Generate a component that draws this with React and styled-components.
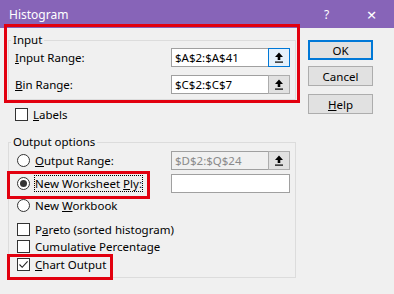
import React from 'react'
import styled, { createGlobalStyle } from 'styled-components'

const Global = createGlobalStyle`
  html, body { margin: 0; padding: 0; overflow: hidden; }
  body { font-family: "Noto Sans", "Open Sans", sans-serif; font-size: 11.5px; color: #000; }
`

const Window = styled.div`
  width: 394px;
  height: 294px;
  background: #f0f0f0;
  display: flex;
  flex-direction: column;
`

const TitleBar = styled.div`
  height: 28px;
  background: #8764b8;
  color: #fff;
  display: flex;
  align-items: center;
  padding: 0 0 0 9px;
  font-size: 12px;
`

const Title = styled.div`
  flex: 1;
`

const TitleBtn = styled.div`
  width: 45px;
  text-align: center;
  font-size: ${p => p.$big ? '17px' : '12px'};
`

const Body = styled.div`
  flex: 1;
  display: flex;
  padding: 0 0 0 8px;
`

const Left = styled.div`
  width: 288px;
  display: flex;
  flex-direction: column;
`

const Right = styled.div`
  display: flex;
  flex-direction: column;
  gap: 6px;
  margin: 12px 0 0 12px;
`

const Mark = styled.div`
  position: relative;
  &::after {
    content: '';
    position: absolute;
    inset: ${p => p.$inset};
    border: 3px solid #e2000f;
    pointer-events: none;
  }
`

const Group = styled.fieldset`
  margin: ${p => p.$mt || 0}px 0 0 0;
  padding: 0 5px ${p => p.$pb || 0}px 6px;
  border: 1px solid #dcdcdc;
  min-width: 0;
  display: flex;
  flex-direction: column;
  gap: ${p => p.$gap || 0}px;
`

const Legend = styled.legend`
  padding: 0 2px;
  margin-left: -4px;
  line-height: 16px;
  margin-bottom: ${p => p.$mb || 0}px;
`

const Row = styled.div`
  display: flex;
  align-items: center;
  height: ${p => p.$h || 19}px;
  margin-top: ${p => p.$mt || 0}px;
  padding-left: ${p => p.$pl || 0}px;
`

const RowLabel = styled.div`
  flex: 1;
  display: flex;
  align-items: center;
`

const Field = styled.div`
  width: ${p => p.$w}px;
  height: 19px;
  box-sizing: border-box;
  border: 1px solid #a0a0a0;
  background: ${p => p.$disabled ? '#f0f0f0' : '#fff'};
  color: ${p => p.$disabled ? '#8a8a8a' : '#000'};
  padding: 0 3px;
  line-height: 17px;
  display: flex;
  align-items: center;
`

const FieldWrap = styled.div`
  display: flex;
  background: #fff;
`

const PickBtn = styled.div`
  width: 22px;
  height: 19px;
  box-sizing: border-box;
  border: 1px solid ${p => p.$focus ? '#0078d7' : '#adadad'};
  background: ${p => p.$focus ? '#e5f1fb' : '#e1e1e1'};
  display: flex;
  align-items: center;
  justify-content: center;
  margin-left: -1px;
`

const Box = styled.span`
  width: 13px;
  height: 13px;
  box-sizing: border-box;
  border: 1px solid #333;
  background: #fff;
  margin: 0 5px 0 2px;
  display: inline-flex;
  align-items: center;
  justify-content: center;
`

const Radio = styled.span`
  width: 13px;
  height: 13px;
  box-sizing: border-box;
  border: 1px solid #333;
  border-radius: 50%;
  background: #fff;
  margin: 0 5px 0 2px;
  display: inline-flex;
  align-items: center;
  justify-content: center;
  &::after {
    content: '';
    width: 7px;
    height: 7px;
    border-radius: 50%;
    background: ${p => p.$on ? '#333' : 'transparent'};
  }
`

const Text = styled.span`
  ${p => p.$focus && 'outline: 1px dotted #000; outline-offset: 0px;'}
`

const U = styled.span`
  text-decoration: underline;
`

const Button = styled.div`
  width: 65px;
  height: 20px;
  box-sizing: border-box;
  border: ${p => p.$default ? '2px solid #0078d7' : '1px solid #adadad'};
  background: #e1e1e1;
  display: flex;
  align-items: center;
  justify-content: center;
  margin-top: ${p => p.$mt || 0}px;
`

const Arrow = () => (
  <svg width="10" height="11" viewBox="0 0 10 11">
    <path d="M5 0.5 L9 5 L6.3 5 L6.3 8 L3.7 8 L3.7 5 L1 5 Z" fill="#000" />
    <rect x="1" y="9.5" width="8" height="1.2" fill="#000" />
  </svg>
)

const Check = () => (
  <svg width="11" height="11" viewBox="0 0 11 11">
    <path d="M1.5 5.5 L4.2 8.3 L9.6 2.4" fill="none" stroke="#222" strokeWidth="1.1" />
  </svg>
)

const App = () => {
  return (
    <Window>
      <Global />
      <TitleBar>
        <Title>Histogram</Title>
        <TitleBtn>?</TitleBtn>
        <TitleBtn $big>×</TitleBtn>
      </TitleBar>
      <Body>
        <Left>
          <Mark $inset="-4px -4px -3px -4px">
            <Group $mt={4} $pb={5} $gap={8}>
              <Legend>Input</Legend>
              <Row>
                <RowLabel><U>I</U>nput Range:</RowLabel>
                <FieldWrap>
                  <Field $w={98}>$A$2:$A$41</Field>
                  <PickBtn $focus><Arrow /></PickBtn>
                </FieldWrap>
              </Row>
              <Row>
                <RowLabel><U>B</U>in Range:</RowLabel>
                <FieldWrap>
                  <Field $w={98}>$C$2:$C$7</Field>
                  <PickBtn><Arrow /></PickBtn>
                </FieldWrap>
              </Row>
            </Group>
          </Mark>
          <Row $mt={7} $h={14} $pl={5}>
            <RowLabel><Box /><U>L</U>abels</RowLabel>
          </Row>
          <Group $mt={13} $pb={5}>
            <Legend $mb={1}>Output options</Legend>
            <Row>
              <RowLabel><Radio /><Text><U>O</U>utput Range:</Text></RowLabel>
              <FieldWrap>
                <Field $w={98} $disabled>$D$2:$Q$24</Field>
                <PickBtn><Arrow /></PickBtn>
              </FieldWrap>
            </Row>
            <Row $mt={3} $h={20}>
              <Mark $inset="-5px -8px -8px -8px">
                <RowLabel><Radio $on /><Text $focus>New Worksheet <U>P</U>ly:</Text></RowLabel>
              </Mark>
              <RowLabel />
              <Field $w={119} />
            </Row>
            <Row $mt={2} $h={20}>
              <RowLabel><Radio /><Text>New <U>W</U>orkbook</Text></RowLabel>
            </Row>
            <Row $mt={6} $h={16}>
              <RowLabel><Box />P<U>a</U>reto (sorted histogram)</RowLabel>
            </Row>
            <Row $mt={1} $h={16}>
              <RowLabel><Box />Cumulative Percentage</RowLabel>
            </Row>
            <Row $mt={2} $h={16}>
              <Mark $inset="-3px -7px -8px -8px">
                <RowLabel><Box><Check /></Box><U>C</U>hart Output</RowLabel>
              </Mark>
            </Row>
          </Group>
        </Left>
        <Right>
          <Button $default>OK</Button>
          <Button>Cancel</Button>
          <Button $mt={2}><U>H</U>elp</Button>
        </Right>
      </Body>
    </Window>
  )
}

export default App
